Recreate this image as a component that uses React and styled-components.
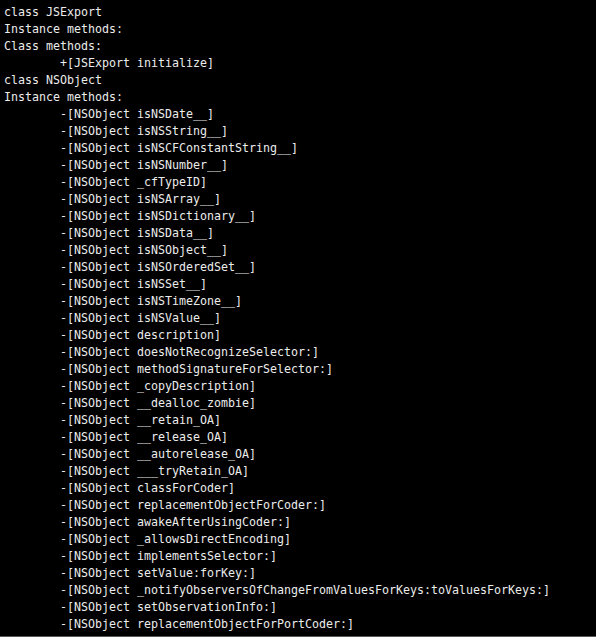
import React from 'react';
import styled, { createGlobalStyle } from 'styled-components';

const GlobalStyle = createGlobalStyle`
  html, body {
    margin: 0;
    padding: 0;
    background: #000;
  }
`;

const Terminal = styled.div`
  box-sizing: border-box;
  width: 596px;
  height: 637px;
  padding: 4px 4px 0;
  background: #000;
  border-bottom: 1px solid #5a5a5a;
  overflow: hidden;
`;

const Line = styled.div`
  height: 17px;
  line-height: 17px;
  padding-left: ${(p) => (p.indent ? '56px' : '0')};
  font-family: "DejaVu Sans Mono", Menlo, monospace;
  font-size: 11.63px;
  color: #ececec;
  white-space: pre;
`;

const nsMethods = [
  'isNSDate__',
  'isNSString__',
  'isNSCFConstantString__',
  'isNSNumber__',
  '_cfTypeID',
  'isNSArray__',
  'isNSDictionary__',
  'isNSData__',
  'isNSObject__',
  'isNSOrderedSet__',
  'isNSSet__',
  'isNSTimeZone__',
  'isNSValue__',
  'description',
  'doesNotRecognizeSelector:',
  'methodSignatureForSelector:',
  '_copyDescription',
  '__dealloc_zombie',
  '__retain_OA',
  '__release_OA',
  '__autorelease_OA',
  '___tryRetain_OA',
  'classForCoder',
  'replacementObjectForCoder:',
  'awakeAfterUsingCoder:',
  '_allowsDirectEncoding',
  'implementsSelector:',
  'setValue:forKey:',
  '_notifyObserversOfChangeFromValuesForKeys:toValuesForKeys:',
  'setObservationInfo:',
  'replacementObjectForPortCoder:',
];

const App = () => {
  return (
    <>
      <GlobalStyle />
      <Terminal>
        <Line>class JSExport</Line>
        <Line>Instance methods:</Line>
        <Line>Class methods:</Line>
        <Line indent>+[JSExport initialize]</Line>
        <Line>class NSObject</Line>
        <Line>Instance methods:</Line>
        {nsMethods.map((m) => (
          <Line indent key={m}>-[NSObject {m}]</Line>
        ))}
      </Terminal>
    </>
  );
};

export default App;
